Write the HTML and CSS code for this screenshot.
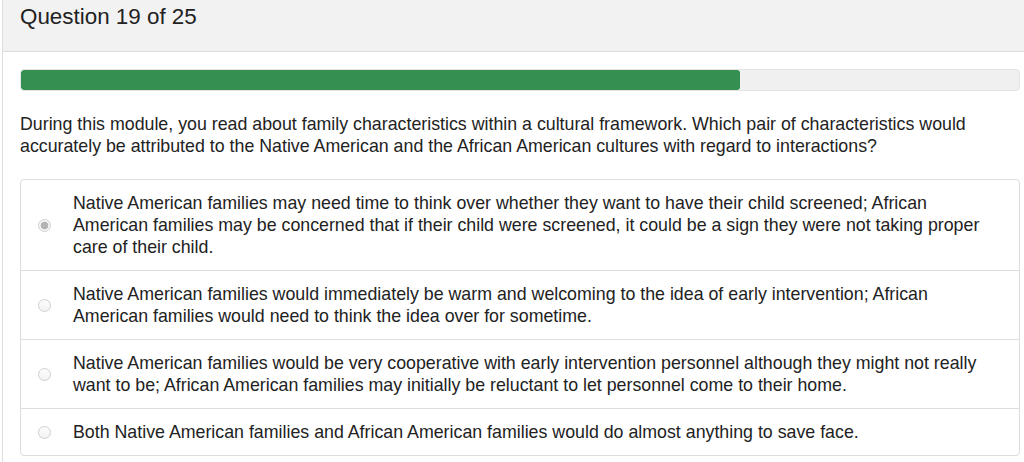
FILE: index.html
```html
<!DOCTYPE html>
<html lang="en">
<head>
    <meta charset="UTF-8">
    <meta name="viewport" content="width=device-width, initial-scale=1.0">
    <title>Question 19 of 25</title>
    <link rel="stylesheet" href="styles.css">
</head>
<body>

    <div class="panel">
        <div class="panel-heading">Question 19 of 25</div>

        <div class="panel-body">
            <!-- Progress -->
            <div class="progress">
                <div class="progress-bar" style="width: 72%"></div>
            </div>

            <p class="question">During this module, you read about family characteristics within a cultural framework. Which pair of characteristics would accurately be attributed to the Native American and the African American cultures with regard to interactions?</p>

            <!-- Answer choices -->
            <ul class="answers">
                <li class="answer">
                    <span class="radio checked"></span>
                    <span class="answer-text">Native American families may need time to think over whether they want to have their child screened; African American families may be concerned that if their child were screened, it could be a sign they were not taking proper care of their child.</span>
                </li>
                <li class="answer">
                    <span class="radio"></span>
                    <span class="answer-text">Native American families would immediately be warm and welcoming to the idea of early intervention; African American families would need to think the idea over for sometime.</span>
                </li>
                <li class="answer">
                    <span class="radio"></span>
                    <span class="answer-text">Native American families would be very cooperative with early intervention personnel although they might not really want to be; African American families may initially be reluctant to let personnel come to their home.</span>
                </li>
                <li class="answer">
                    <span class="radio"></span>
                    <span class="answer-text">Both Native American families and African American families would do almost anything to save face.</span>
                </li>
            </ul>
        </div>
    </div>

</body>
</html>
```
FILE: styles.css
```css
/* General Styles */
body {
    font-family: 'Liberation Sans', Arial, sans-serif;
    margin: 0;
    padding: 0;
    background-color: #fff;
    color: #222;
}

.panel {
    margin-left: 2px;
    border-left: 1px solid #ddd;
    min-height: 462px;
}

.panel-heading {
    height: 52px;
    box-sizing: border-box;
    padding: 4px 0 0 17px;
    font-size: 22.4px;
    line-height: 26px;
    background-color: #f2f2f2;
    border-bottom: 1px solid #ddd;
}

.panel-body {
    padding: 17px 4px 0 17px;
}

/* Progress bar */
.progress {
    height: 22px;
    box-sizing: border-box;
    background-color: #f0f0f0;
    border: 1px solid #e3e3e3;
    border-radius: 4px;
    overflow: hidden;
}

.progress-bar {
    height: 100%;
    background-color: #348f50;
    border-radius: 3px;
}

.question {
    font-size: 17.8px;
    line-height: 22px;
    margin: 22px 0 22px;
}

/* Answer list */
.answers {
    list-style: none;
    margin: 0;
    padding: 0;
    border: 1px solid #ddd;
    border-radius: 4px;
}

.answer {
    display: flex;
    align-items: center;
    padding: 12px 30px 12px 0;
    border-top: 1px solid #ddd;
    font-size: 17.8px;
    line-height: 22px;
}

.answer:first-child {
    border-top: none;
}

.radio {
    flex: none;
    width: 11px;
    height: 11px;
    margin: 0 22px 0 17px;
    border: 1px solid #cfcfcf;
    border-radius: 50%;
    background: linear-gradient(#fdfdfd, #f2f2f2);
}

.radio.checked {
    background: radial-gradient(circle, #b3b3b3 0, #b3b3b3 3.5px, #f6f6f6 4.2px);
}
```
